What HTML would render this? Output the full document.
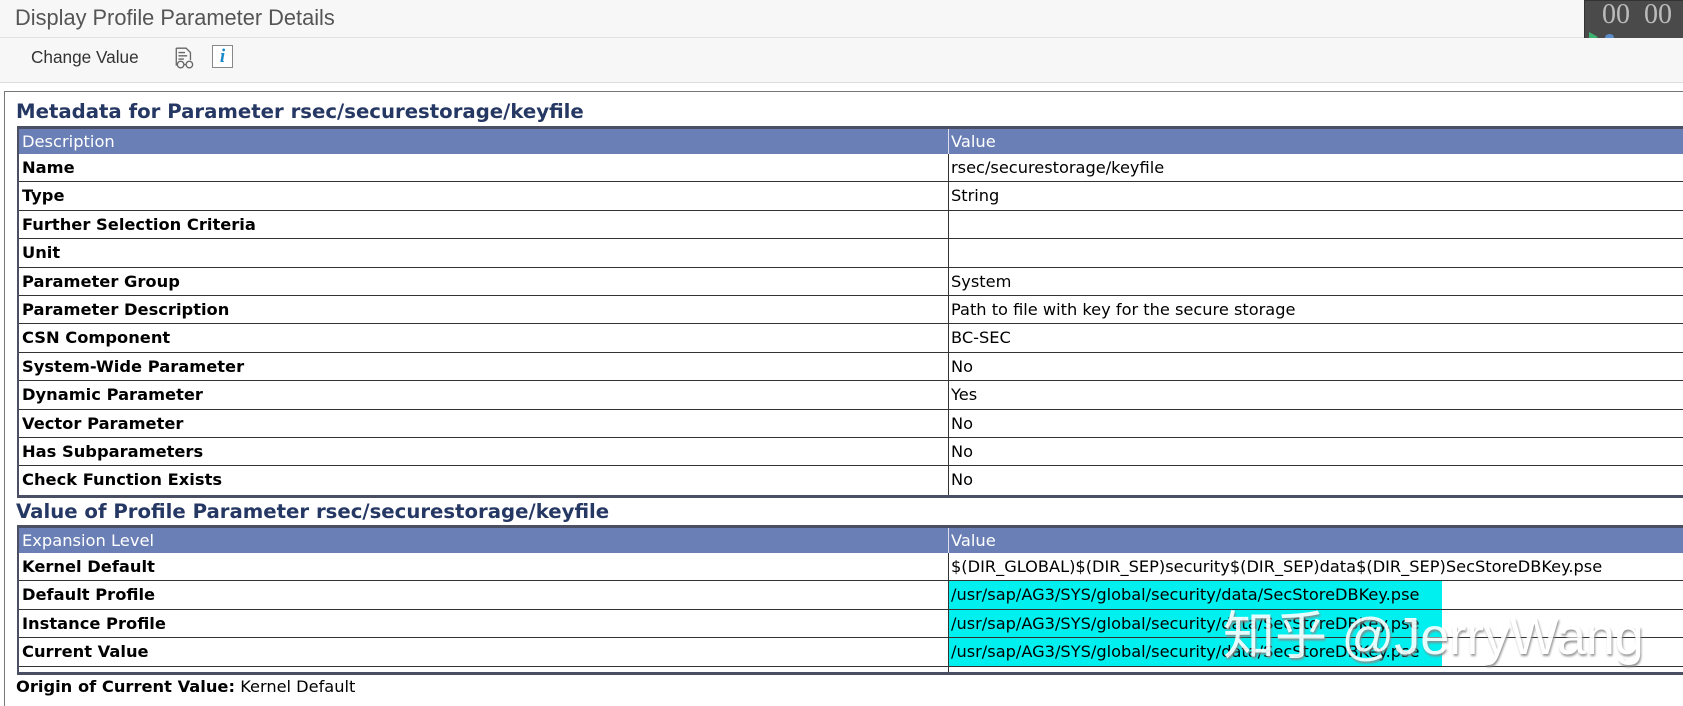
<!DOCTYPE html>
<html><head><meta charset="utf-8"><style>
*{margin:0;padding:0;box-sizing:border-box}
html,body{width:1683px;height:706px;overflow:hidden}
body{background:#fff;position:relative;font-family:"DejaVu Sans","Liberation Sans",sans-serif}
.a{position:absolute}
.title{left:0;top:0;width:1683px;height:38px;background:#f7f7f7;border-bottom:1px solid #e2e2e2}
.title span{position:absolute;left:15px;top:5px;font-family:"Liberation Sans",sans-serif;font-size:21.8px;color:#555}
.tb{left:0;top:38px;width:1683px;height:45px;background:#f7f7f7;border-bottom:1px solid #dcdcdc}
.cont{left:4px;top:91px;width:1679px;height:615px;border:1px solid #777;border-right:none;border-bottom:none}
h2{position:absolute;left:16px;font-size:19.7px;font-weight:bold;color:#253763;white-space:nowrap}
.tbl{position:absolute;left:17px;width:1666px;border-left:2px solid #4a4f63;overflow:hidden}
.row{position:relative;height:28.4px;border-bottom:1px solid #333}
.row .l{position:absolute;left:3px;top:0;line-height:28px;font-size:16.3px;font-weight:bold;color:#000;white-space:nowrap}
.row .v{position:absolute;left:929px;top:0;height:100%;border-left:1px solid #333;padding-left:2px;line-height:28px;font-size:16.2px;color:#000;white-space:nowrap}
.hd{height:28px;background:#6a7fb5;border-top:3px solid #4a4f63;border-bottom:none}
.hd .l,.hd .v{font-weight:normal;color:#fff;font-size:16.3px;line-height:26px}
.hd .v{border-left:1px solid #dde}
.cy{background:#00f0f0;width:494px}
</style></head><body>
<div class="a title"><span>Display Profile Parameter Details</span></div>
<div class="a" style="left:1584px;top:0;width:99px;height:46px;background:#4a4a4a;border:1px solid #333;border-right:none;overflow:hidden">
<span class="a" style="left:17px;top:-2px;font-family:'Liberation Serif',serif;font-size:28px;color:#bbb;white-space:nowrap">00&nbsp;&nbsp;00</span>
<span class="a" style="left:4px;top:31px;width:0;height:0;border-left:9px solid #3cb371;border-top:5px solid transparent;border-bottom:5px solid transparent"></span>
<span class="a" style="left:20px;top:33px;width:9px;height:7px;border-radius:50%;background:#5b8ccc"></span>
</div>
<div class="a tb">
<span class="a" style="left:31px;top:9px;font-family:'Liberation Sans',sans-serif;font-size:17.2px;color:#333">Change Value</span>
<svg class="a" style="left:173px;top:8px" width="24" height="24" viewBox="0 0 22 22" fill="none" stroke="#666" stroke-width="1.2"><path d="M3 2h9l4 4v7M3 2v16M5 6h6M5 9h8M5 12h5"/><circle cx="7" cy="17" r="3"/><circle cx="15" cy="17" r="3"/><path d="M10 17h2"/></svg>
<span class="a" style="left:212px;top:7px;width:21px;height:23px;border:1px solid #888;background:#fff;color:#1a8acb;font-family:'Liberation Serif',serif;font-style:italic;font-weight:bold;font-size:19px;text-align:center;line-height:21px">i</span>
</div>
<div class="a cont"></div>
<h2 style="top:100px">Metadata for Parameter rsec/securestorage/keyfile</h2>
<div class="tbl" style="top:126px;border-bottom:3px solid #4a4f63">
<div class="row hd"><span class="l">Description</span><span class="v">Value</span></div>
<div class="row"><span class="l">Name</span><span class="v">rsec/securestorage/keyfile</span></div>
<div class="row"><span class="l">Type</span><span class="v">String</span></div>
<div class="row"><span class="l">Further Selection Criteria</span><span class="v"></span></div>
<div class="row"><span class="l">Unit</span><span class="v"></span></div>
<div class="row"><span class="l">Parameter Group</span><span class="v">System</span></div>
<div class="row"><span class="l">Parameter Description</span><span class="v">Path to file with key for the secure storage</span></div>
<div class="row"><span class="l">CSN Component</span><span class="v">BC-SEC</span></div>
<div class="row"><span class="l">System-Wide Parameter</span><span class="v">No</span></div>
<div class="row"><span class="l">Dynamic Parameter</span><span class="v">Yes</span></div>
<div class="row"><span class="l">Vector Parameter</span><span class="v">No</span></div>
<div class="row"><span class="l">Has Subparameters</span><span class="v">No</span></div>
<div class="row" style="border-bottom:none"><span class="l">Check Function Exists</span><span class="v">No</span></div>
</div>
<h2 style="top:500px">Value of Profile Parameter rsec/securestorage/keyfile</h2>
<div class="tbl" style="top:525px;border-bottom:3px solid #4a4f63">
<div class="row hd"><span class="l">Expansion Level</span><span class="v">Value</span></div>
<div class="row"><span class="l">Kernel Default</span><span class="v">$(DIR_GLOBAL)$(DIR_SEP)security$(DIR_SEP)data$(DIR_SEP)SecStoreDBKey.pse</span></div>
<div class="row"><span class="l">Default Profile</span><span class="v cy">/usr/sap/AG3/SYS/global/security/data/SecStoreDBKey.pse</span></div>
<div class="row"><span class="l">Instance Profile</span><span class="v cy">/usr/sap/AG3/SYS/global/security/data/SecStoreDBKey.pse</span></div>
<div class="row"><span class="l">Current Value</span><span class="v cy">/usr/sap/AG3/SYS/global/security/data/SecStoreDBKey.pse</span></div>
<div class="row" style="height:5px;border-bottom:none"><span class="v" style="background:transparent"></span></div>
</div>
<div class="a" style="left:16px;top:677px;font-size:16.3px;white-space:nowrap"><b>Origin of Current Value:</b> <span style="font-size:16.2px">Kernel Default</span></div>
<div class="a" style="left:1223px;top:594px;font-family:'Liberation Sans','Noto Sans CJK SC',sans-serif;font-size:52px;color:#fff;text-shadow:1px 2px 2px #888;white-space:nowrap;opacity:.9">知乎 @JerryWang</div>
</body></html>
